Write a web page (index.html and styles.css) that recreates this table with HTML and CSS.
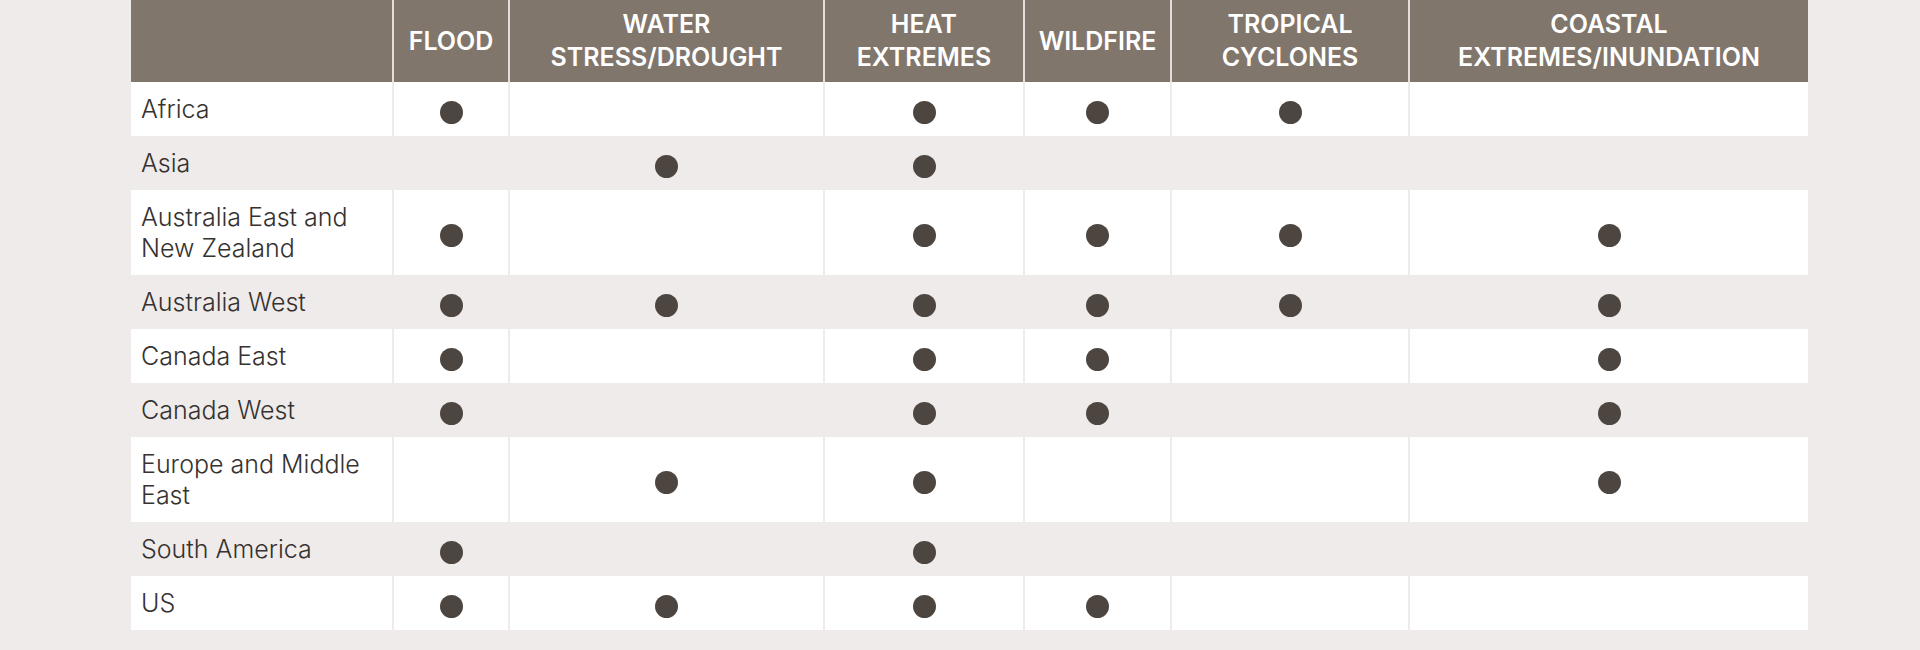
FILE: index.html
```html
<!DOCTYPE html>
<html lang="en">
<head>
<meta charset="utf-8">
<title>Climate hazards by region</title>
<link rel="stylesheet" href="styles.css">
</head>
<body>
<table class="hazards">
  <colgroup>
    <col class="c-region">
    <col class="c-flood">
    <col class="c-water">
    <col class="c-heat">
    <col class="c-fire">
    <col class="c-trop">
    <col class="c-coast">
  </colgroup>
  <thead>
    <tr>
      <th></th>
      <th>FLOOD</th>
      <th>WATER<br>STRESS/DROUGHT</th>
      <th>HEAT<br>EXTREMES</th>
      <th>WILDFIRE</th>
      <th>TROPICAL<br>CYCLONES</th>
      <th>COASTAL<br>EXTREMES/INUNDATION</th>
    </tr>
  </thead>
  <tbody>
    <tr>
      <td class="region">Africa</td>
      <td><span class="dot"></span></td><td></td><td><span class="dot"></span></td><td><span class="dot"></span></td><td><span class="dot"></span></td><td></td>
    </tr>
    <tr>
      <td class="region">Asia</td>
      <td></td><td><span class="dot"></span></td><td><span class="dot"></span></td><td></td><td></td><td></td>
    </tr>
    <tr>
      <td class="region">Australia East and<br>New Zealand</td>
      <td><span class="dot"></span></td><td></td><td><span class="dot"></span></td><td><span class="dot"></span></td><td><span class="dot"></span></td><td><span class="dot"></span></td>
    </tr>
    <tr>
      <td class="region">Australia West</td>
      <td><span class="dot"></span></td><td><span class="dot"></span></td><td><span class="dot"></span></td><td><span class="dot"></span></td><td><span class="dot"></span></td><td><span class="dot"></span></td>
    </tr>
    <tr>
      <td class="region">Canada East</td>
      <td><span class="dot"></span></td><td></td><td><span class="dot"></span></td><td><span class="dot"></span></td><td></td><td><span class="dot"></span></td>
    </tr>
    <tr>
      <td class="region">Canada West</td>
      <td><span class="dot"></span></td><td></td><td><span class="dot"></span></td><td><span class="dot"></span></td><td></td><td><span class="dot"></span></td>
    </tr>
    <tr>
      <td class="region">Europe and Middle<br>East</td>
      <td></td><td><span class="dot"></span></td><td><span class="dot"></span></td><td></td><td></td><td><span class="dot"></span></td>
    </tr>
    <tr>
      <td class="region">South America</td>
      <td><span class="dot"></span></td><td></td><td><span class="dot"></span></td><td></td><td></td><td></td>
    </tr>
    <tr>
      <td class="region">US</td>
      <td><span class="dot"></span></td><td><span class="dot"></span></td><td><span class="dot"></span></td><td><span class="dot"></span></td><td></td><td></td>
    </tr>
  </tbody>
</table>
</body>
</html>
```

FILE: styles.css
```css
html, body {
  margin: 0;
  padding: 0;
  background: #efebea;
}

body {
  padding-left: 131px;
  font-family: Inter, "Liberation Sans", sans-serif;
}

.hazards {
  width: 1677px;
  table-layout: fixed;
  border-collapse: collapse;
  border-spacing: 0;
}

.c-region { width: 262px; }
.c-flood { width: 116px; }
.c-water { width: 315px; }
.c-heat { width: 200px; }
.c-fire { width: 147px; }
.c-trop { width: 238px; }
.c-coast { width: 399px; }

.hazards th {
  background: #81766b;
  color: #ffffff;
  font-weight: 600;
  font-size: 25px;
  line-height: 33px;
  padding: 8px 2px;
  text-align: center;
  vertical-align: middle;
  border-left: 2px solid #e4dfda;
  white-space: nowrap;
}

.hazards th:first-child {
  border-left: none;
}

.hazards td {
  padding: 12px 4px 11px;
  line-height: 31px;
  font-size: 25px;
  font-weight: 300;
  color: #353230;
  text-align: center;
  vertical-align: middle;
  border-left: 2px solid #efebea;
}

.hazards td.region {
  text-align: left;
  padding-left: 10px;
  border-left: none;
  white-space: nowrap;
}

.hazards tbody tr:nth-child(odd) td {
  background: #ffffff;
}

.hazards tbody tr:nth-child(even) td {
  background: #efebea;
}

.dot {
  display: inline-block;
  width: 23px;
  height: 23px;
  border-radius: 50%;
  background: #4d4640;
  vertical-align: middle;
  position: relative;
  top: 1px;
}
```
